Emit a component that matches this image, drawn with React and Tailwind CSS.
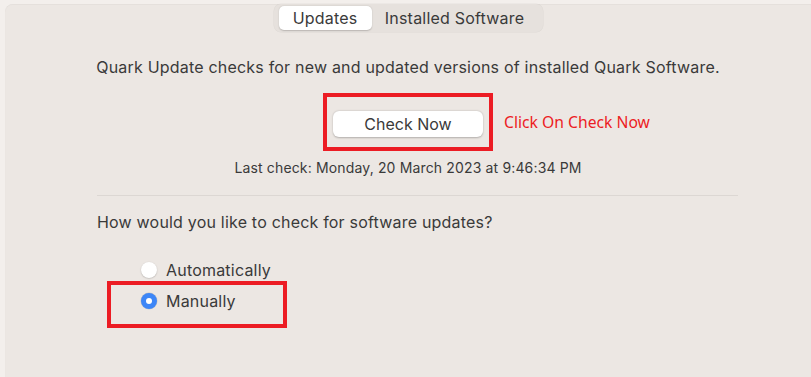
import React, { useState } from 'react';

const Radio = ({ checked, label, onClick }) => (
  <button onClick={onClick} className="flex items-center gap-[9px]">
    {checked ? (
      <span className="w-4 h-4 rounded-full bg-[#3d86f7] flex items-center justify-center shadow-[0_0_0_0.5px_rgba(0,0,0,0.15)]">
        <span className="w-[6px] h-[6px] rounded-full bg-white" />
      </span>
    ) : (
      <span className="w-4 h-4 rounded-full bg-white shadow-[0_0.5px_1.5px_rgba(0,0,0,0.25)]" />
    )}
    <span className="text-[16px] tracking-[0.2px] text-[#3a3a3a]">{label}</span>
  </button>
);

const App = () => {
  const [tab, setTab] = useState('updates');
  const [mode, setMode] = useState('manual');

  return (
    <div className="h-[377px] w-[811px] overflow-hidden bg-[#f3efec] pt-[17px] font-['Inter',sans-serif] text-[#3a3a3a]">
      <div className="ml-[5px] h-[400px] rounded-tl-[8px] bg-[#ece7e3] shadow-[inset_0_0.5px_1px_rgba(0,0,0,0.06)]">
        {/* tab control */}
        <div className="flex justify-center -mt-[13px]">
          <div className="flex items-center h-[28px] px-[5px] rounded-[7px] bg-[#e6e1dd] shadow-[0_0_0_0.5px_rgba(0,0,0,0.06)]">
            <button
              onClick={() => setTab('updates')}
              className={`h-[24px] w-[93px] rounded-[5px] text-[16px] tracking-[0.2px] ${tab === 'updates' ? 'bg-white shadow-[0_0.5px_1.5px_rgba(0,0,0,0.2)]' : ''}`}
            >
              Updates
            </button>
            <button
              onClick={() => setTab('installed')}
              className={`h-[24px] w-[166px] rounded-[5px] text-[16px] tracking-[0.2px] ${tab === 'installed' ? 'bg-white shadow-[0_0.5px_1.5px_rgba(0,0,0,0.2)]' : ''}`}
            >
              Installed Software
            </button>
          </div>
        </div>

        <div className="flex flex-col items-center">
          <p className="mt-[25px] text-[16px] tracking-[0.2px] leading-[20px]">
            Quark Update checks for new and updated versions of installed Quark Software.
          </p>

          <div className="relative mt-[16px] w-[170px] h-[58px] border-4 border-[#ec1c24] flex justify-center pt-[14px]">
            <button className="h-[26px] w-[150px] rounded-[6px] bg-white text-[16px] shadow-[0_0.5px_2px_rgba(0,0,0,0.25)]">
              Check Now
            </button>
            <span className="absolute left-[177px] top-[15px] whitespace-nowrap text-[15.7px] leading-[20px] text-[#ec1c24] font-['Noto_Sans',sans-serif]">
              Click On Check Now
            </span>
          </div>

          <p className="mt-[8px] text-[14px] tracking-[0.15px] leading-[18px]">
            Last check: Monday, 20 March 2023 at 9:46:34 PM
          </p>
        </div>

        <div className="ml-[92px] w-[641px] mt-[18px] h-px bg-[#dcd7d3]" />

        <p className="ml-[92px] mt-[16px] text-[16px] tracking-[0.2px] leading-[20px]">
          How would you like to check for software updates?
        </p>

        <div className="ml-[136px] mt-[26px]">
          <Radio checked={mode === 'auto'} label="Automatically" onClick={() => setMode('auto')} />
        </div>
        <div className="ml-[102px] -mt-[1px] w-[180px] h-[47px] border-4 border-[#ec1c24] pl-[30px] pt-[4px]">
          <Radio checked={mode === 'manual'} label="Manually" onClick={() => setMode('manual')} />
        </div>
      </div>
    </div>
  );
};

export default App;
